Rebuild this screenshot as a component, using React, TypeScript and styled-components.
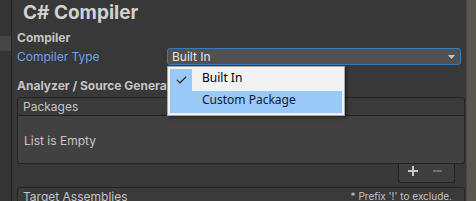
import styled, { createGlobalStyle } from "styled-components";

const GlobalStyle = createGlobalStyle`
  html, body {
    margin: 0;
    padding: 0;
    background: #383838;
  }
  body {
    font-family: Inter, "Noto Sans", sans-serif;
  }
`;

const Window = styled.div`
  display: flex;
  width: 476px;
  height: 201px;
  overflow: hidden;
  background: #383838;
`;

const Hierarchy = styled.aside`
  flex: none;
  width: 12px;
  box-sizing: border-box;
  padding-top: 36px;
  background: #353535;
  border-right: 1px solid #232323;
`;

const HierarchyRow = styled.div<{ $selected?: boolean }>`
  height: 15px;
  background: ${(p) => (p.$selected ? "#464646" : "transparent")};
`;

const Inspector = styled.main`
  flex: 1;
  min-width: 0;
  display: flex;
  flex-direction: column;
  padding: 0 1px 0 5px;
  color: #c4c4c4;
  font-size: 12px;
`;

const Title = styled.h1`
  margin: 1px 0 0;
  padding-left: 6px;
  font-size: 19px;
  line-height: 24px;
  font-weight: 700;
  color: #d2d2d2;
`;

const SectionHeader = styled.div<{ $gap: number }>`
  margin-top: ${(p) => p.$gap}px;
  font-weight: 700;
  line-height: 18px;
  white-space: nowrap;
`;

const FieldRow = styled.div`
  display: flex;
  align-items: flex-start;
  margin-top: 1px;
  height: 18px;
`;

const FieldLabel = styled.label<{ $focused?: boolean }>`
  flex: none;
  width: 150px;
  line-height: 18px;
  color: ${(p) => (p.$focused ? "#6ea3ef" : "#c4c4c4")};
`;

const Dropdown = styled.div`
  position: relative;
  flex: 1;
  display: flex;
  align-items: center;
  justify-content: space-between;
  height: 17px;
  margin-right: 4px;
  padding: 0 5px 0 4px;
  box-sizing: border-box;
  background: #515151;
  border: 1px solid #3a79bb;
  border-radius: 3px;
  color: #e4e4e4;
  line-height: 15px;
`;

const Popup = styled.ul`
  position: absolute;
  left: -1px;
  top: calc(100% + 2px);
  z-index: 10;
  width: 178px;
  margin: 0;
  padding: 2px;
  list-style: none;
  box-sizing: border-box;
  background: #f2f2f2;
  border: 1px solid #a8a8a8;
  box-shadow: 2px 2px 3px rgba(0, 0, 0, 0.4);
  font-family: "Noto Sans", "Open Sans", sans-serif;
  font-size: 12px;
  color: #000;
`;

const MenuItem = styled.li<{ $hover?: boolean }>`
  display: flex;
  height: 22px;
  background: ${(p) => (p.$hover ? "#99c9f7" : "transparent")};
  color: ${(p) => (p.$hover ? "#10183a" : "#000")};
`;

const CheckCell = styled.span<{ $checked?: boolean }>`
  flex: none;
  width: 22px;
  display: flex;
  align-items: center;
  justify-content: center;
  background: ${(p) => (p.$checked ? "#99c9f7" : "transparent")};
`;

const MenuLabel = styled.span`
  padding: 0 0 4px 10px;
  line-height: 18px;
`;

const ListBox = styled.section<{ $gap: number }>`
  display: flex;
  flex-direction: column;
  margin-top: ${(p) => p.$gap}px;
`;

const ListHeader = styled.div`
  display: flex;
  justify-content: space-between;
  height: 19px;
  box-sizing: border-box;
  padding: 0 12px 0 5px;
  background: #3a3a3a;
  border: 1px solid #232323;
  border-radius: 3px 3px 0 0;
  line-height: 17px;
`;

const HeaderNote = styled.span`
  font-size: 10px;
`;

const ListBody = styled.div`
  height: 48px;
  box-sizing: border-box;
  padding: 16px 0 0 6px;
  background: #414141;
  border: 1px solid #232323;
  border-top: none;
  border-radius: 0 0 3px 3px;
  line-height: 18px;
`;

const ListFooter = styled.div`
  align-self: flex-end;
  display: flex;
  align-items: flex-start;
  gap: 15px;
  width: 57px;
  height: 19px;
  margin-right: 10px;
  padding: 2px 0 0 9px;
  box-sizing: border-box;
  background: #3e3e3e;
  border: 1px solid #232323;
  border-top: none;
  border-radius: 0 0 3px 3px;
`;

const SceneStrip = styled.div`
  flex: none;
  width: 9px;
  background: #5a5650;
  border-left: 1px solid #4a4744;
`;

const CheckIcon = () => (
  <svg width="11" height="8" viewBox="0 0 11 8">
    <path d="M0.8 3.6 L4 6.8 L10.2 0.8" fill="none" stroke="#2b2b2b" strokeWidth="1.2" />
  </svg>
);

const ArrowIcon = () => (
  <svg width="7" height="4" viewBox="0 0 7 4">
    <path d="M0 0 H7 L3.5 4 Z" fill="#c4c4c4" />
  </svg>
);

const PlusIcon = () => (
  <svg width="10" height="10" viewBox="0 0 10 10">
    <path d="M5 0 V10 M0 5 H10" stroke="#c8c8c8" strokeWidth="2" />
  </svg>
);

const MinusIcon = () => (
  <svg width="9" height="10" viewBox="0 0 9 10">
    <path d="M0 5 H9" stroke="#7c7c7c" strokeWidth="1.6" />
  </svg>
);

const App = () => {
  return (
    <>
      <GlobalStyle />
      <Window>
        <Hierarchy>
          <HierarchyRow $selected />
        </Hierarchy>
        <Inspector>
          <Title>C# Compiler</Title>
          <SectionHeader $gap={4}>Compiler</SectionHeader>
          <FieldRow>
            <FieldLabel $focused>Compiler Type</FieldLabel>
            <Dropdown>
              <span>Built In</span>
              <ArrowIcon />
              <Popup>
                <MenuItem>
                  <CheckCell $checked>
                    <CheckIcon />
                  </CheckCell>
                  <MenuLabel>Built In</MenuLabel>
                </MenuItem>
                <MenuItem $hover>
                  <CheckCell />
                  <MenuLabel>Custom Package</MenuLabel>
                </MenuItem>
              </Popup>
            </Dropdown>
          </FieldRow>
          <SectionHeader $gap={11}>Analyzer / Source Generators</SectionHeader>
          <ListBox $gap={2}>
            <ListHeader>
              <span>Packages</span>
            </ListHeader>
            <ListBody>List is Empty</ListBody>
            <ListFooter>
              <PlusIcon />
              <MinusIcon />
            </ListFooter>
          </ListBox>
          <ListBox $gap={4}>
            <ListHeader>
              <span>Target Assemblies</span>
              <HeaderNote>* Prefix '!' to exclude.</HeaderNote>
            </ListHeader>
          </ListBox>
        </Inspector>
        <SceneStrip />
      </Window>
    </>
  );
};

export default App;
